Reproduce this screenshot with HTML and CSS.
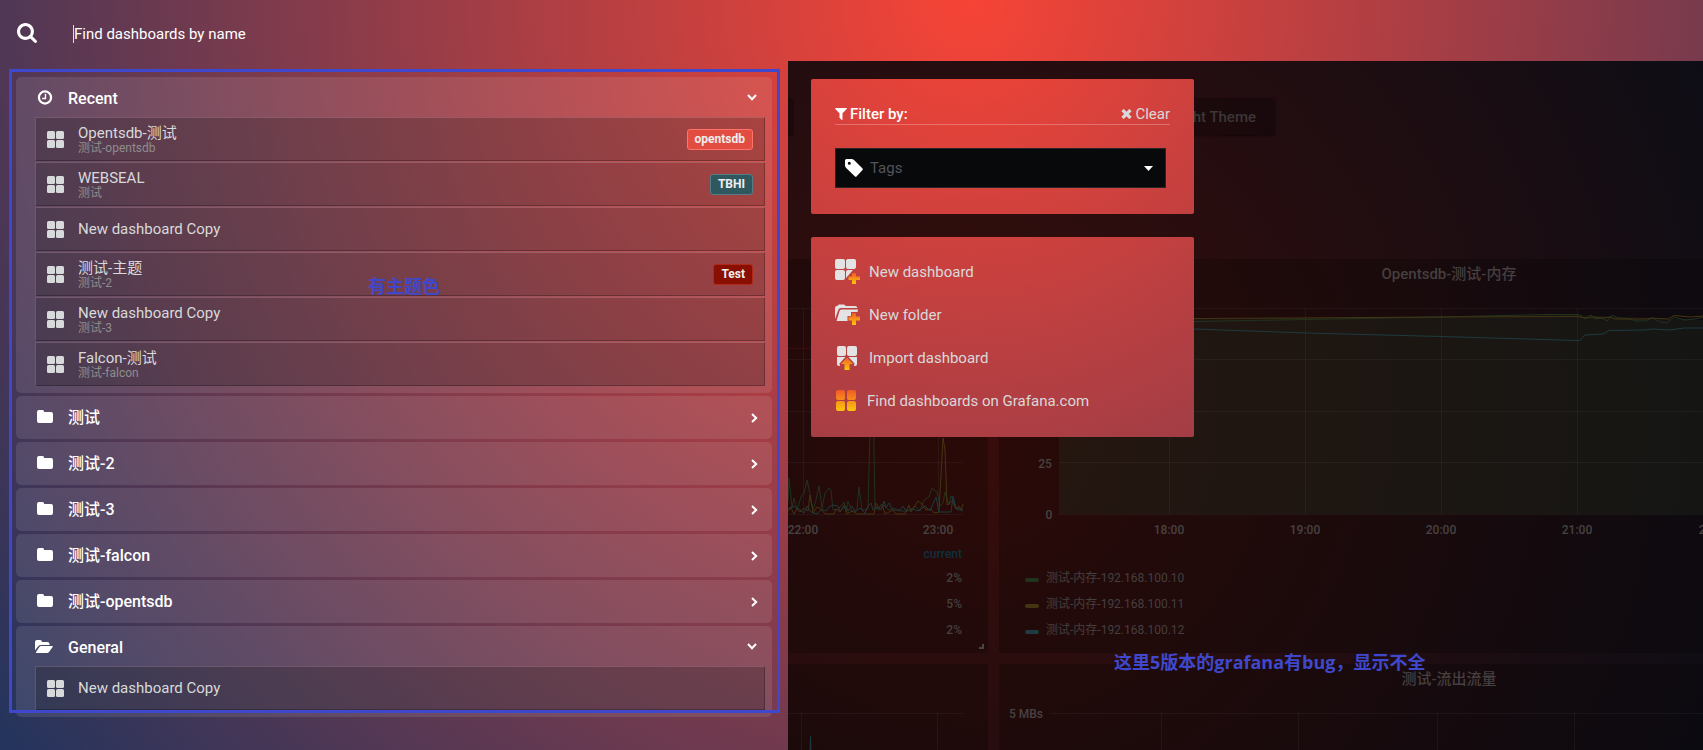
FILE: index.html
```html
<!DOCTYPE html>
<html lang="zh">
<head>
    <meta charset="utf-8">
    <title>Grafana - Find dashboards</title>
    <link rel="stylesheet" href="styles.css">
</head>
<body>

    <svg class="defs" width="0" height="0">
        <defs>
            <linearGradient id="orange" x1="0" y1="0" x2="0" y2="1">
                <stop offset="0" stop-color="#f05a28"/>
                <stop offset="1" stop-color="#fbca0a"/>
            </linearGradient>
            <linearGradient id="orange-all" gradientUnits="userSpaceOnUse" x1="0" y1="0" x2="0" y2="22">
                <stop offset="0" stop-color="#f05a28"/>
                <stop offset="1" stop-color="#fbca0a"/>
            </linearGradient>
        </defs>
        <symbol id="i-dash" viewBox="0 0 17 17">
            <rect x="0" y="0" width="8" height="8" rx="1.5"/><rect x="9" y="0" width="8" height="8" rx="1.5"/>
            <rect x="0" y="9" width="8" height="8" rx="1.5"/><rect x="9" y="9" width="8" height="8" rx="1.5"/>
        </symbol>
        <symbol id="i-folder" viewBox="0 0 16 13">
            <path d="M0 2Q0 0 2 0H5.5Q7.2 0 7.2 2H14Q16 2 16 4V11Q16 13 14 13H2Q0 13 0 11Z"/>
        </symbol>
        <symbol id="i-open" viewBox="0 0 18 13">
            <path d="M0 11V2Q0 0 2 0H5Q7 0 7 2H12.500Q14.500 2 14.500 4V5H6Q4.200 5 3 6.400L0 10.200Z"/>
            <path d="M6 6H17.200Q18.300 6 17.600 7L14.200 11.800Q13.400 13 12 13H1.500Q.5 13 1.100 12L4.200 7.200Q5 6 6 6Z"/>
        </symbol>
        <symbol id="i-right" viewBox="0 0 7 10"><path d="M1 1L5.200 5L1 9" fill="none" stroke="#fff" stroke-width="2"/></symbol>
        <symbol id="i-down" viewBox="0 0 10 7"><path d="M1 1L5 5.200L9 1" fill="none" stroke="#fff" stroke-width="2"/></symbol>
    </svg>

    <header class="search-bar">
        <label for="search"><svg class="icon-search" viewBox="0 128 1664 1664"><path d="M1152 832q0-185-131.500-316.500t-316.500-131.500-316.500 131.500-131.500 316.500 131.500 316.500 316.500 131.500 316.500-131.500 131.500-316.500zm512 832q0 52-38 90t-90 38q-54 0-90-38l-343-342q-179 124-399 124-143 0-273.500-55.500t-225-150-150-225-55.500-273.500 55.500-273.500 150-225 225-150 273.500-55.500 273.500 55.500 225 150 150 225 55.500 273.500q0 220-124 399l343 343q37 37 37 90z"/></svg></label>
        <input type="text" id="search" class="search-input" placeholder="Find dashboards by name" aria-label="Find dashboards by name">
    </header>

    <main class="search-main">
        <div class="results">
            <section class="section open">
                <button class="section-head">
                    <svg class="icon-head" viewBox="0 0 16 16"><circle cx="8" cy="8" r="6.500" fill="none" stroke="#fff" stroke-width="2.400"/><path d="M8.500 4V9H5" fill="none" stroke="#fff" stroke-width="1.500"/></svg>
                    <span>Recent</span>
                    <svg class="arrow-down"><use href="#i-down"/></svg>
                </button>
                <a href="#" class="item">
                    <svg class="icon-dash"><use href="#i-dash"/></svg>
                    <span class="item-body"><span class="item-title">Opentsdb-测试</span><span class="item-folder">测试-opentsdb</span></span>
                    <span class="tag tag-red">opentsdb</span>
                </a>
                <a href="#" class="item">
                    <svg class="icon-dash"><use href="#i-dash"/></svg>
                    <span class="item-body"><span class="item-title">WEBSEAL</span><span class="item-folder">测试</span></span>
                    <span class="tag tag-teal">TBHI</span>
                </a>
                <a href="#" class="item">
                    <svg class="icon-dash"><use href="#i-dash"/></svg>
                    <span class="item-body"><span class="item-title">New dashboard Copy</span></span>
                </a>
                <a href="#" class="item">
                    <svg class="icon-dash"><use href="#i-dash"/></svg>
                    <span class="item-body"><span class="item-title">测试-主题</span><span class="item-folder">测试-2</span></span>
                    <span class="tag tag-dark">Test</span>
                </a>
                <a href="#" class="item">
                    <svg class="icon-dash"><use href="#i-dash"/></svg>
                    <span class="item-body"><span class="item-title">New dashboard Copy</span><span class="item-folder">测试-3</span></span>
                </a>
                <a href="#" class="item">
                    <svg class="icon-dash"><use href="#i-dash"/></svg>
                    <span class="item-body"><span class="item-title">Falcon-测试</span><span class="item-folder">测试-falcon</span></span>
                </a>
            </section>
            <section class="section">
                <button class="section-head"><svg class="icon-head"><use href="#i-folder"/></svg><span>测试</span><svg class="arrow-right"><use href="#i-right"/></svg></button>
            </section>
            <section class="section">
                <button class="section-head"><svg class="icon-head"><use href="#i-folder"/></svg><span>测试-2</span><svg class="arrow-right"><use href="#i-right"/></svg></button>
            </section>
            <section class="section">
                <button class="section-head"><svg class="icon-head"><use href="#i-folder"/></svg><span>测试-3</span><svg class="arrow-right"><use href="#i-right"/></svg></button>
            </section>
            <section class="section">
                <button class="section-head"><svg class="icon-head"><use href="#i-folder"/></svg><span>测试-falcon</span><svg class="arrow-right"><use href="#i-right"/></svg></button>
            </section>
            <section class="section">
                <button class="section-head"><svg class="icon-head"><use href="#i-folder"/></svg><span>测试-opentsdb</span><svg class="arrow-right"><use href="#i-right"/></svg></button>
            </section>
            <section class="section open">
                <button class="section-head"><svg class="icon-head icon-open"><use href="#i-open"/></svg><span>General</span><svg class="arrow-down"><use href="#i-down"/></svg></button>
                <a href="#" class="item">
                    <svg class="icon-dash"><use href="#i-dash"/></svg>
                    <span class="item-body"><span class="item-title">New dashboard Copy</span></span>
                </a>
            </section>
            <div class="mark-box"></div>
            <div class="mark-text mark-left">有主题色</div>
        </div>

        <div class="backdrop">
            <!-- dashboard under the search overlay -->
            <div class="theme-row">
                <div class="theme-cut"></div>
                <button class="theme-btn">Light Theme</button>
            </div>
            <div class="panels">
                <div class="panel">
                    <h3 class="panel-title"></h3>
                    <svg class="graph" width="200" height="253" viewBox="788 289 200 253">
                        <path class="grid" d="M788 308.500H963M788 359.500H963M788 411.500H963M788 462.500H963M788 514.500H963M803.500 308V514M938.500 308V514"/>
                        <path d="M788 348.500H963" stroke="#3d0c0a" fill="none"/>
                        <path class="green" d="M788 502L789 478L792 508L794 498L797 510L801 497L804 493L807 480L810 494L813 510L816 500L819 486L822 508L825 493L829 488L831 490L833 510L838 509L841 506L844 502L846 512L848 501L852 512L857 509L859 487L862 510L868 509L871 390L873 390L875 508L880 510L884 505L889 510L894 508L900 511L908 511L915 506L920 511L924 500L929 497L932 488L937 492L940 506L943 503L945 492L949 505L951 496L953 500L956 509L963 511"/>
                        <path class="yellow" d="M788 511L791 508L794 514L797 509L800 512L804 508L808 511L810 495L813 513L817 507L821 509L825 514L834 514L836 509L840 512L844 505L847 514L852 511L857 514L874 514L876 503L879 508L882 504L885 514L893 510L896 514L905 514L909 505L911 512L918 501L922 504L926 510L931 509L934 513L939 512L943 438L945 450L947 505L952 501L956 509L959 506L961 510L963 504"/>
                        <path class="blue" d="M788 509L793 506L799 509L804 513L807 506L811 512L817 514L822 509L826 511L829 507L833 505L838 506L840 511L846 506L848 511L852 506L855 512L860 508L865 513L868 506L871 503L873 510L877 507L881 510L884 501L886 508L889 503L893 510L900 510L903 506L906 511L913 509L918 511L925 506L930 511L936 497L939 512L951 512L953 496L956 508L963 510"/>
                        <text x="803" y="534">22:00</text>
                        <text x="938" y="534">23:00</text>
                    </svg>
                    <table class="values">
                        <tr><th>current</th></tr>
                        <tr><td>2%</td></tr>
                        <tr><td>5%</td></tr>
                        <tr><td>2%</td></tr>
                    </table>
                    <div class="resize"></div>
                </div>
                <div class="panel">
                    <h3 class="panel-title">Opentsdb-测试-内存</h3>
                    <svg class="graph" width="900" height="253" viewBox="999 289 900 253">
                        <path d="M1059 322L1194 318L1577 315L1703 320H1880V514H1059Z" fill="rgba(32,40,28,.4)"/>
                        <path class="grid" d="M1059 308.500H1880M1059 359.500H1880M1059 411.500H1880M1059 462.500H1880M1059 514.500H1880M1169.500 308V514M1305.500 308V514M1441.500 308V514M1577.500 308V514"/>
                        <path class="green" d="M1059 325L1194 321.500L1306 319.500L1441 317L1545 314.500H1579L1585 319L1591 315L1595 319L1602 318L1607 321L1612 315L1618 318L1630 319L1636 321L1645 321L1652 318L1660 322L1667 323L1674 317L1685 320L1695 319L1703 317L1880 318"/>
                        <path class="yellow" d="M1059 320L1194 318.500L1306 318L1441 317L1577 316.500L1587 318L1593 317L1603 318L1610 317L1615 319L1645 319L1652 318L1668 319L1674 315.500L1690 317L1703 316L1880 318"/>
                        <path class="blue" d="M1059 324L1194 329L1306 333L1441 336.500L1577 340.500H1580L1585 335L1603 334L1609 330.500L1645 330L1652 329L1670 330L1684 328L1703 328L1880 327"/>
                        <text x="1045" y="468">25</text>
                        <text x="1049" y="519">0</text>
                        <text x="1169" y="534">18:00</text>
                        <text x="1305" y="534">19:00</text>
                        <text x="1441" y="534">20:00</text>
                        <text x="1577" y="534">21:00</text>
                        <text x="1714" y="534">22:00</text>
                    </svg>
                    <ul class="legend">
                        <li><i class="line-green"></i>测试-内存-192.168.100.10</li>
                        <li><i class="line-yellow"></i>测试-内存-192.168.100.11</li>
                        <li><i class="line-blue"></i>测试-内存-192.168.100.12</li>
                    </ul>
                </div>
                <div class="panel">
                    <h3 class="panel-title"></h3>
                    <svg class="graph" width="200" height="90" viewBox="788 694 200 90">
                        <path class="grid" d="M788 713.500H963M801.500 713V784M937.500 713V784"/>
                        <path class="blue" d="M809 784L810.500 736L812 784"/>
                    </svg>
                </div>
                <div class="panel">
                    <h3 class="panel-title">测试-流出流量</h3>
                    <svg class="graph" width="900" height="90" viewBox="999 694 900 90">
                        <path class="grid" d="M1050 713.500H1880M1161.500 713V784M1298.500 713V784M1437.500 713V784M1574.500 713V784"/>
                        <text x="1026" y="718">5 MBs</text>
                    </svg>
                </div>
            </div>

            <aside class="side">
                <div class="card filter">
                    <div class="filter-head">
                        <label for="tags"><svg width="12" height="12" viewBox="0 0 12 12"><path d="M.6 0H11.400Q12.300.3 11.700 1L7.500 5.300V11.500Q7.300 12.300 6.600 11.800L4.700 10Q4.500 9.700 4.500 9.300V5.300L.3 1Q-.3.300.6 0Z"/></svg>Filter by:</label>
                        <a href="#"><svg width="11" height="10" viewBox="0 0 11 10"><path d="M1.500 1L9.500 9M9.500 1L1.500 9" stroke="#d8d9da" stroke-width="3.200"/></svg>Clear</a>
                    </div>
                    <div class="select-box">
                        <svg width="18" height="18" viewBox="0 0 18 18"><path fill-rule="evenodd" d="M0 1.500Q0 0 1.500 0H6.500Q8 0 9 1L17.300 9.200Q18.300 10.200 17.300 11.200L11.700 17.200Q10.700 18.200 9.700 17.200L1.200 9Q0 7.800 0 6.500ZM4.300 2.700A1.500 1.500 0 1 0 4.300 5.700A1.500 1.500 0 1 0 4.300 2.700Z"/></svg>
                        <select id="tags"><option>Tags</option></select>
                        <svg width="9" height="5" viewBox="0 0 9 5"><path d="M0 0H9L4.500 5Z"/></svg>
                    </div>
                </div>
                <nav class="card links">
                    <a href="#"><svg width="26" height="26" viewBox="0 0 26 26"><rect width="10" height="10" rx="2"/><rect x="11" width="10" height="10" rx="2"/><rect y="11" width="10" height="10" rx="2"/><path d="M13 11H18L11 19V13Q11 11 13 11Z"/><path d="M17 14H21V17.500H25V21H21V25H17V21H13.500V17.500H17Z" fill="url(#orange)"/></svg>New dashboard</a>
                    <a href="#"><svg width="26" height="26" viewBox="0 0 26 26"><path d="M0 17V6Q0 4 2 4L4 2.500H9L11 4H20Q22 4 22.500 6H6Q4 6 3.300 8Z"/><path d="M6.500 7.500H23L22.500 10H16V14H12.500V19H1.500L4.500 9Q5 7.500 6.500 7.500Z"/><path d="M17 11H21V14.500H25V18.500H21V23H17V18.500H13.500V14.500H17Z" fill="url(#orange)"/></svg>New folder</a>
                    <a href="#"><svg width="26" height="26" viewBox="0 0 26 26"><rect x="2" y="1" width="9" height="10" rx="2"/><rect x="12" y="1" width="10" height="10" rx="2"/><path d="M2 12H10.500L4.500 18.500L5 21H4Q2 21 2 19ZM22 12H13.500L19.500 18.500L19 21H20Q22 21 22 19Z"/><path d="M12 12.500L18 19H14.500V25H9.500V19H6Z" fill="url(#orange)"/></svg>Import dashboard</a>
                    <a href="#" class="link-com"><svg width="22" height="22" viewBox="0 0 22 22"><g fill="url(#orange-all)"><rect x="1" width="9" height="10" rx="2"/><rect x="12" width="9" height="10" rx="2"/><rect x="1" y="11" width="9" height="10" rx="2"/><rect x="12" y="11" width="9" height="10" rx="2"/></g></svg>Find dashboards on Grafana.com</a>
                </nav>
            </aside>
            <div class="mark-text mark-right">这里5版本的grafana有bug，显示不全</div>
        </div>
    </main>

</body>
</html>
```

FILE: styles.css
```css
* {
    box-sizing: border-box;
}

body {
    margin: 0;
    height: 100vh;
    overflow: hidden;
    display: flex;
    flex-direction: column;
    color: #d8d9da;
    font-family: Roboto, "Noto Sans CJK SC", sans-serif;
    font-size: 15px;
    line-height: 20px;
}

body,
.card {
    background: radial-gradient(circle 1350px at 57% 0, #f74436, #0d3261) fixed;
}

.defs {
    position: absolute;
}

svg {
    fill: #fff;
    flex: none;
}

a {
    color: #d8d9da;
    text-decoration: none;
}

button {
    border: none;
    background: none;
    font: inherit;
    color: #fff;
    text-align: left;
}

/* search bar */
.search-bar {
    height: 61px;
    flex: none;
    display: flex;
    align-items: center;
    padding: 6px 17px 0;
}

.icon-search {
    display: block;
    width: 20px;
    height: 20px;
    margin-bottom: 2px;
}

.search-input {
    flex: 1;
    margin-left: 36px;
    padding: 0;
    border: none;
    border-left: 1px solid #ddd;
    outline: none;
    background: none;
    color: #fff;
    font: inherit;
    height: 18px;
}

.search-input::placeholder {
    color: #fff;
    opacity: 1;
}

.search-main {
    flex: 1;
    min-height: 0;
    display: grid;
    grid-template-columns: 788fr 915fr;
}

/* results */
.results {
    position: relative;
    padding: 16px 16px 0;
    min-width: 0;
}

.section {
    background: rgba(255, 255, 255, 0.1);
    border-radius: 5px;
    margin-bottom: 3px;
    padding: 0 7px 3px 19px;
}

.section.open {
    padding-bottom: 6px;
}

.section-head {
    display: flex;
    align-items: center;
    width: 100%;
    height: 40px;
    padding: 3px 7px 0 2px;
    font-size: 16px;
    font-weight: 500;
}

.section-head span {
    flex: 1;
    margin-left: 15px;
}

.icon-head {
    width: 16px;
    height: 15px;
    margin-bottom: 2px;
}

.icon-open {
    width: 18px;
    margin-left: -2px;
}

.arrow-right {
    width: 7px;
    height: 10px;
}

.arrow-down {
    width: 10px;
    height: 7px;
    margin-right: 1px;
    margin-bottom: 2px;
}

.item {
    display: flex;
    align-items: center;
    height: 44px;
    margin-bottom: 1px;
    padding: 1px 12px 0;
    background: rgba(0, 0, 0, 0.2);
    box-shadow: inset 1px 1px 0 rgba(255, 200, 220, 0.2), inset -1px -1px 0 rgba(0, 0, 0, 0.25);
}

.icon-dash {
    width: 17px;
    height: 17px;
    fill: #d8d9da;
}

.item-body {
    flex: 1;
    margin-left: 14px;
    display: flex;
    flex-direction: column;
}

.item-title {
    line-height: 17px;
}

.item-folder {
    font-size: 12px;
    line-height: 13px;
    color: #8e8e8e;
}

.tag {
    height: 21px;
    padding: 0 7px;
    border: 1px solid;
    border-radius: 3px;
    font-size: 12px;
    font-weight: 700;
    line-height: 19px;
    color: #eee;
}

.tag-red {
    background: #e24d42;
    border-color: #ff7368;
}

.tag-teal {
    background: #2f575e;
    border-color: #557d84;
}

.tag-dark {
    background: #890f02;
    border-color: #af2a1b;
}

/* hand-drawn notes */
.mark-box {
    position: absolute;
    top: 8px;
    left: 9px;
    right: 8px;
    height: 644px;
    border: 3px solid #3f48cc;
}

.mark-text {
    position: absolute;
    color: #3f48cc;
    font-family: "Open Sans", "Noto Sans CJK SC", sans-serif;
    font-size: 18px;
    font-weight: 700;
    line-height: 24px;
    white-space: nowrap;
}

.mark-left {
    top: 213px;
    left: 368px;
}

.mark-right {
    top: 589px;
    left: 326px;
}

/* dashboard behind */
.backdrop {
    position: relative;
    overflow: hidden;
    min-width: 0;
    background: radial-gradient(circle 900px at 57% 56%, #380d0a, #0a0d17) fixed;
}

.theme-row {
    display: flex;
    padding-top: 37px;
    height: 198px;
}

.theme-cut,
.theme-btn {
    height: 37px;
    background: rgba(0, 0, 0, 0.25);
    box-shadow: 1px 1px 2px rgba(0, 0, 0, 0.5);
    border-radius: 0 3px 3px 0;
}

.theme-cut {
    width: 4px;
}

.theme-btn {
    width: 390px;
    margin-left: 92px;
    padding: 0 18px;
    text-align: right;
    font-weight: 500;
    color: #3b3737;
}

.panels {
    display: grid;
    grid-template-columns: 200px 900px;
    gap: 11px;
}

.panel {
    position: relative;
    background: rgba(0, 0, 0, 0.22);
    border-radius: 3px;
    color: #453f3f;
    font-size: 13px;
}

.panel-title {
    margin: 0;
    height: 30px;
    text-align: center;
    font-size: 15px;
    font-weight: 500;
    line-height: 30px;
}

.graph {
    display: block;
}

.graph path {
    stroke-width: 1;
}

.grid {
    fill: none;
    stroke: rgba(130, 130, 130, 0.09);
}

.green {
    fill: none;
    stroke: #21331f;
}

.yellow {
    fill: none;
    stroke: #443511;
}

.blue {
    fill: none;
    stroke: #1d3b40;
}

.graph text {
    fill: #484242;
    font-size: 12px;
    font-weight: 500;
    text-anchor: middle;
}

.values {
    width: 174px;
    border-collapse: collapse;
    text-align: right;
    margin-bottom: 10px;
    font-size: 12px;
    font-weight: 500;
}

.values td,
.values th {
    padding: 0;
    height: 26px;
}

.values th {
    height: 23px;
    font-weight: 500;
    text-align: right;
    color: #0d303c;
}

.resize {
    position: absolute;
    right: 4px;
    bottom: 4px;
    width: 5px;
    height: 5px;
    border-right: 2px solid #4a4545;
    border-bottom: 2px solid #4a4545;
}

.legend {
    margin: 23px 0 10px;
    padding: 0 0 0 26px;
    list-style: none;
    font-size: 12px;
}

.legend li {
    display: flex;
    align-items: center;
    height: 26px;
}

.legend i {
    width: 14px;
    height: 4px;
    margin-right: 7px;
    margin-top: 3px;
    border-radius: 2px;
}

.line-green {
    background: #21331f;
}

.line-yellow {
    background: #443511;
}

.line-blue {
    background: #1d3b40;
}

/* filter + links */
.side {
    position: absolute;
    top: 18px;
    left: 23px;
    width: 383px;
}

.card {
    border-radius: 2px;
    padding: 24px;
}

.filter {
    height: 135px;
    margin-bottom: 23px;
}

.filter-head {
    display: flex;
    justify-content: space-between;
    height: 22px;
    border-bottom: 1px solid rgba(255, 255, 255, 0.25);
}

.filter-head label,
.filter-head a {
    display: flex;
    align-items: center;
    gap: 3px;
}

.filter-head label {
    color: #fff;
    font-weight: 500;
}

.select-box {
    display: flex;
    align-items: center;
    height: 40px;
    margin: 23px 4px 0 0;
    padding: 0 12px 0 9px;
    background: #08090b;
    border: 1px solid #262628;
}

.select-box select {
    flex: 1;
    appearance: none;
    border: none;
    outline: none;
    background: none;
    padding: 0;
    margin-left: 7px;
    font: inherit;
    color: #52545c;
}

.links {
    padding: 13px 24px 15px;
}

.links a {
    display: flex;
    align-items: center;
    gap: 8px;
    height: 43px;
}

.links svg {
    fill: #e3e3e3;
}

.links .link-com {
    gap: 10px;
}
```
